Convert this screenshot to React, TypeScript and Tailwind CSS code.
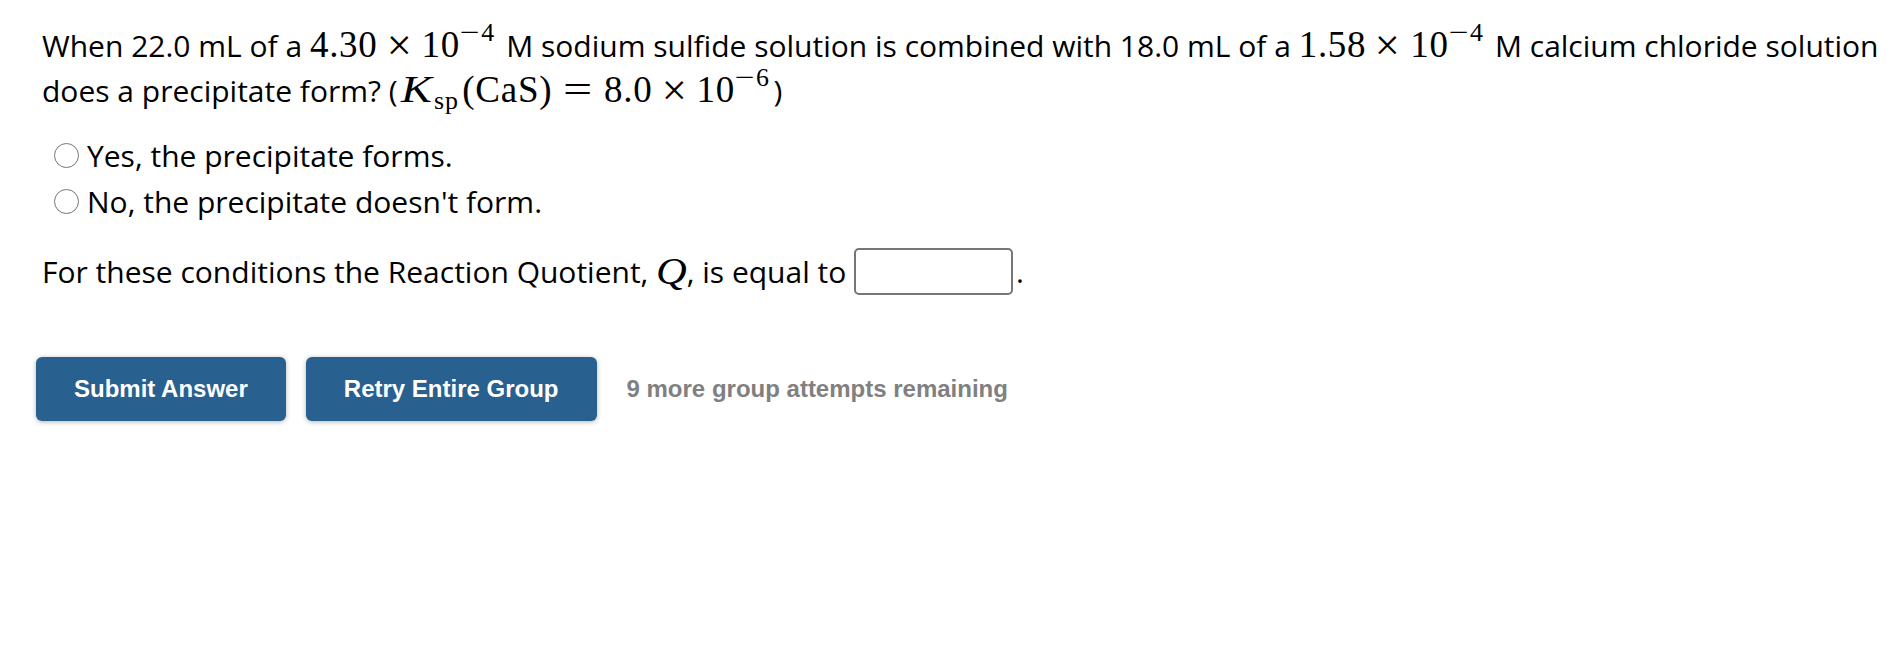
import React from "react";

const MATH = "font-['Liberation_Serif',serif] text-[37px] leading-none whitespace-nowrap tracking-[0.02em]";

function Minus() {
  return <span className="inline-block w-[0.8em] text-center scale-x-[1.35]">−</span>;
}

function Sup({ children }: { children: React.ReactNode }) {
  return (
    <span className="relative -top-[0.6em] text-[0.7em] ml-[0.02em] mr-[0.14em]">
      <Minus />
      {children}
    </span>
  );
}

function Times() {
  return <span className="inline-block mx-[0.3em] scale-[1.2]">×</span>;
}

function Sci({ a, e }: { a: string; e: string }) {
  return (
    <span className={MATH}>
      {a}
      <Times />
      10
      <Sup>{e}</Sup>
    </span>
  );
}

function Radio({ label }: { label: string }) {
  return (
    <label className="flex items-center h-[46px]">
      <span className="ml-[12px] w-[25px] h-[25px] rounded-full border-[1.5px] border-[#767676] bg-white shrink-0" />
      <span className="ml-[8px]">{label}</span>
    </label>
  );
}

export default function App() {
  return (
    <div className="w-[1892px] h-[672px] bg-white text-black font-['Open_Sans','Noto_Sans',sans-serif] text-[30px] leading-[45px] pl-[42px] pt-[23px]">
      <p className="whitespace-nowrap">
        When 22.0 mL of a <Sci a="4.30" e="4" /> M sodium sulfide solution is combined with 18.0 mL of a{" "}
        <Sci a="1.58" e="4" /> M calcium chloride solution
        <br />
        does a precipitate form? (
        <span className={MATH}>
          <i className="inline-block origin-left scale-x-[1.25] mr-[0.2em] ml-[0.1em]">K</i>
          <span className="relative top-[0.28em] text-[0.7em]">sp</span>
          <span className="ml-[0.1em]">(CaS)</span>
          <span className="inline-block mx-[0.4em] w-[0.6em] text-center scale-x-[1.4]">=</span>
          8.0
          <Times />
          10
          <Sup>6</Sup>
        </span>
        )
      </p>

      <div className="mt-[19px] flex flex-col">
        <Radio label="Yes, the precipitate forms." />
        <Radio label="No, the precipitate doesn't form." />
      </div>

      <div className="mt-[24px] flex items-center">
        <span className="whitespace-pre">For these conditions the Reaction Quotient, </span>
        <span className={MATH}>
          <i className="inline-block origin-left scale-x-[1.15] mr-[3px]">Q</i>
        </span>
        <span className="whitespace-pre">, is equal to </span>
        <input
          type="text"
          aria-label="Q"
          className="w-[159px] h-[47px] border-2 border-[#767676] rounded-[5px] bg-white outline-none"
        />
        <span className="ml-[3px]">.</span>
      </div>

      <div className="mt-[62px] -ml-[6px] flex items-center font-['Liberation_Sans',Arial,sans-serif] font-bold text-[24px] leading-none">
        <button className="h-[64px] px-[38px] rounded-[6px] bg-[#286090] text-white shadow-[0_1px_5px_rgba(0,0,0,0.3)]">
          Submit Answer
        </button>
        <button className="ml-[20px] h-[64px] px-[38px] rounded-[6px] bg-[#286090] text-white shadow-[0_1px_5px_rgba(0,0,0,0.3)]">
          Retry Entire Group
        </button>
        <span className="ml-[30px] text-[#808080]">9 more group attempts remaining</span>
      </div>
    </div>
  );
}
